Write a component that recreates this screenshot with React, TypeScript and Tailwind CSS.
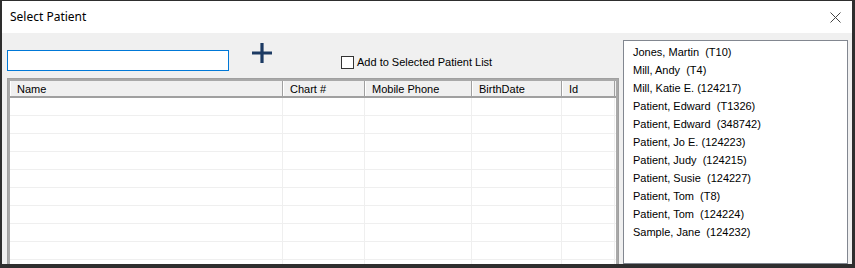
import React from 'react';

const columns = [
  { label: 'Name', width: 'w-[273px]' },
  { label: 'Chart #', width: 'w-[82px]' },
  { label: 'Mobile Phone', width: 'w-[107px]' },
  { label: 'BirthDate', width: 'w-[90px]' },
  { label: 'Id', width: 'w-[53px]' },
];

const patients = [
  'Jones, Martin  (T10)',
  'Mill, Andy  (T4)',
  'Mill, Katie E. (124217)',
  'Patient, Edward  (T1326)',
  'Patient, Edward  (348742)',
  'Patient, Jo E. (124223)',
  'Patient, Judy  (124215)',
  'Patient, Susie  (124227)',
  'Patient, Tom  (T8)',
  'Patient, Tom  (124224)',
  'Sample, Jane  (124232)',
];

function PlusIcon() {
  return (
    <svg width="22" height="22" viewBox="0 0 22 22">
      <path d="M11 1v20M1 11h20" stroke="#1c3a63" strokeWidth="3.2" />
    </svg>
  );
}

function PatientGrid() {
  const rows = Array.from({ length: 10 });
  return (
    <div className="mt-[-1px] h-[190px] border border-[#a0a0a0] bg-white overflow-hidden">
      <div className="h-full border-l-2 border-t-2 border-r-2 border-[#a9a9a9]">
        <div className="flex h-[17px] border-b-2 border-[#a0a0a0] bg-[#f0f0f0]">
          {columns.map((c) => (
            <div
              key={c.label}
              className={`${c.width} shrink-0 border-r border-[#a0a0a0] border-l border-l-white pl-[6px] text-[11px] leading-[16px] text-black`}
            >
              {c.label}
            </div>
          ))}
          <div className="flex-1 bg-[#f0f0f0]" />
        </div>
        {rows.map((_, i) => (
          <div key={i} className="flex h-[18px] border-b border-[#efefef]">
            {columns.map((c) => (
              <div key={c.label} className={`${c.width} shrink-0 border-r border-[#efefef]`} />
            ))}
          </div>
        ))}
      </div>
    </div>
  );
}

export default function App() {
  return (
    <div
      className="w-[855px] h-[268px] bg-[#2e2e2e] pl-[2px] pr-[3px] pt-[1px] pb-[4px]"
      style={{ fontFamily: '"Liberation Sans", Arial, sans-serif' }}
    >
      <div className="flex h-full flex-col bg-[#f0f0f0] overflow-hidden">
        <div className="flex h-[32px] shrink-0 items-center justify-between bg-white pl-[8px] pr-[10px]">
          <span className="text-[12px] text-black" style={{ fontFamily: '"Noto Sans", sans-serif' }}>
            Select Patient
          </span>
          <svg width="11" height="11" viewBox="0 0 11 11" className="mr-[1px]">
            <path d="M0.5 0.5l10 10M10.5 0.5l-10 10" stroke="#444" strokeWidth="1" />
          </svg>
        </div>
        <div className="flex flex-1 min-h-0 pl-[5px] pr-[4px]">
          <div className="w-[612px] shrink-0">
            <div className="flex h-[46px]">
              <div className="mt-[17px] h-[21px] w-[222px] border border-[#0078d7] bg-white" />
              <div className="ml-[22px] mt-[9px]">
                <PlusIcon />
              </div>
              <label className="ml-[68px] mt-[23px] flex h-[13px] items-center">
                <span className="h-[13px] w-[13px] border border-[#333] bg-white" />
                <span className="ml-[3px] text-[11px] text-black">Add to Selected Patient List</span>
              </label>
            </div>
            <PatientGrid />
          </div>
          <div className="ml-[4px] mt-[7px] flex-1 border border-[#828790] bg-white pl-[9px] pt-[2px]">
            {patients.map((p) => (
              <div key={p} className="h-[18px] whitespace-pre text-[11px] leading-[18px] text-black">
                {p}
              </div>
            ))}
          </div>
        </div>
      </div>
    </div>
  );
}
